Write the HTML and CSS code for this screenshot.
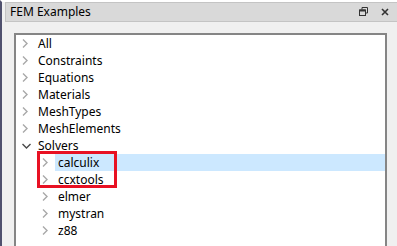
FILE: index.html
```html
<!DOCTYPE html>
<html lang="en">
<head>
  <meta charset="UTF-8" />
  <title>FEM Examples</title>
  <link rel="stylesheet" href="styles.css">
</head>
<body>
  <div class="dock">
    <div class="titlebar">
      <span class="title">FEM Examples</span>
      <span class="buttons">
        <svg class="float-btn" width="9" height="9" viewBox="0 0 9 9">
          <path d="M3 0.5h5.5v5.5h-2M3 0.5v2" fill="none" stroke="#333" stroke-width="1" />
          <rect x="0.5" y="3" width="6" height="5.5" fill="none" stroke="#333" stroke-width="1" />
          <line x1="0.5" y1="3.5" x2="6.5" y2="3.5" stroke="#333" stroke-width="2" />
        </svg>
        <svg class="close-btn" width="8" height="8" viewBox="0 0 8 8">
          <path d="M1 1L7 7M7 1L1 7" stroke="#333" stroke-width="1.6" />
        </svg>
      </span>
    </div>

    <div class="tree">
      <div class="row"><span class="arrow"><svg width="6" height="9" viewBox="0 0 6 9"><path d="M1 0.5L5 4.5L1 8.5" fill="none" stroke="#a8a8a8" stroke-width="1.4"/></svg></span>All</div>
      <div class="row"><span class="arrow"><svg width="6" height="9" viewBox="0 0 6 9"><path d="M1 0.5L5 4.5L1 8.5" fill="none" stroke="#a8a8a8" stroke-width="1.4"/></svg></span>Constraints</div>
      <div class="row"><span class="arrow"><svg width="6" height="9" viewBox="0 0 6 9"><path d="M1 0.5L5 4.5L1 8.5" fill="none" stroke="#a8a8a8" stroke-width="1.4"/></svg></span>Equations</div>
      <div class="row"><span class="arrow"><svg width="6" height="9" viewBox="0 0 6 9"><path d="M1 0.5L5 4.5L1 8.5" fill="none" stroke="#a8a8a8" stroke-width="1.4"/></svg></span>Materials</div>
      <div class="row"><span class="arrow"><svg width="6" height="9" viewBox="0 0 6 9"><path d="M1 0.5L5 4.5L1 8.5" fill="none" stroke="#a8a8a8" stroke-width="1.4"/></svg></span>MeshTypes</div>
      <div class="row"><span class="arrow"><svg width="6" height="9" viewBox="0 0 6 9"><path d="M1 0.5L5 4.5L1 8.5" fill="none" stroke="#a8a8a8" stroke-width="1.4"/></svg></span>MeshElements</div>
      <div class="row"><span class="arrow"><svg width="9" height="6" viewBox="0 0 9 6"><path d="M0.5 1L4.5 5L8.5 1" fill="none" stroke="#4a4a4a" stroke-width="1.4"/></svg></span>Solvers</div>
      <div class="row child selected"><span class="arrow"><svg width="6" height="9" viewBox="0 0 6 9"><path d="M1 0.5L5 4.5L1 8.5" fill="none" stroke="#a8a8a8" stroke-width="1.4"/></svg></span><span class="label">calculix</span></div>
      <div class="row child"><span class="arrow"><svg width="6" height="9" viewBox="0 0 6 9"><path d="M1 0.5L5 4.5L1 8.5" fill="none" stroke="#a8a8a8" stroke-width="1.4"/></svg></span><span class="label">ccxtools</span></div>
      <div class="row child"><span class="arrow"><svg width="6" height="9" viewBox="0 0 6 9"><path d="M1 0.5L5 4.5L1 8.5" fill="none" stroke="#a8a8a8" stroke-width="1.4"/></svg></span><span class="label">elmer</span></div>
      <div class="row child"><span class="arrow"><svg width="6" height="9" viewBox="0 0 6 9"><path d="M1 0.5L5 4.5L1 8.5" fill="none" stroke="#a8a8a8" stroke-width="1.4"/></svg></span><span class="label">mystran</span></div>
      <div class="row child"><span class="arrow"><svg width="6" height="9" viewBox="0 0 6 9"><path d="M1 0.5L5 4.5L1 8.5" fill="none" stroke="#a8a8a8" stroke-width="1.4"/></svg></span><span class="label">z88</span></div>

      <div class="mark"></div>
    </div>
  </div>
</body>
</html>
```

FILE: styles.css
```css
html, body {
  margin: 0;
  padding: 0;
  height: 100%;
  overflow: hidden;
}

body {
  font-family: 'Segoe UI', 'Noto Sans', 'DejaVu Sans', sans-serif;
  font-size: 12px;
  color: #000;
  background: #f0f0f0;
}

.dock {
  height: 100%;
  border-top: 2px solid #ffffff;
  border-left: 2px solid #50516e;
  box-sizing: border-box;
  padding-left: 3px;
  display: flex;
  flex-direction: column;
}

.titlebar {
  flex: none;
  height: 18px;
  background: #d9d9d9;
  border: 1px solid #c4c4c4;
  border-right: none;
  display: flex;
  align-items: center;
  justify-content: space-between;
  padding-left: 4px;
}

.title {
  line-height: 18px;
}

.buttons {
  display: flex;
  align-items: center;
  gap: 13px;
  margin-right: 8px;
}

.float-btn {
  margin-top: -1px;
}

.tree {
  position: relative;
  flex: 1;
  min-height: 0;
  overflow: hidden;
  margin: 11px 10px 0 9px;
  background: #fff;
  border: 2px solid #858585;
  border-bottom: none;
}

.row {
  height: 17px;
  line-height: 17px;
  display: flex;
  align-items: center;
  padding-left: 6px;
  white-space: nowrap;
}

.arrow {
  flex: none;
  width: 16px;
  height: 17px;
  display: flex;
  align-items: center;
  justify-content: flex-start;
}

.row.child {
  padding-left: 26px;
}

.label {
  height: 17px;
  display: flex;
  align-items: center;
  padding-left: 3px;
  margin-left: -3px;
}

.row.selected .label {
  flex: 1;
  background: #cce8ff;
}

.mark {
  position: absolute;
  left: 21px;
  top: 116px;
  width: 74px;
  height: 31px;
  border: 3px solid #e81123;
}
```
